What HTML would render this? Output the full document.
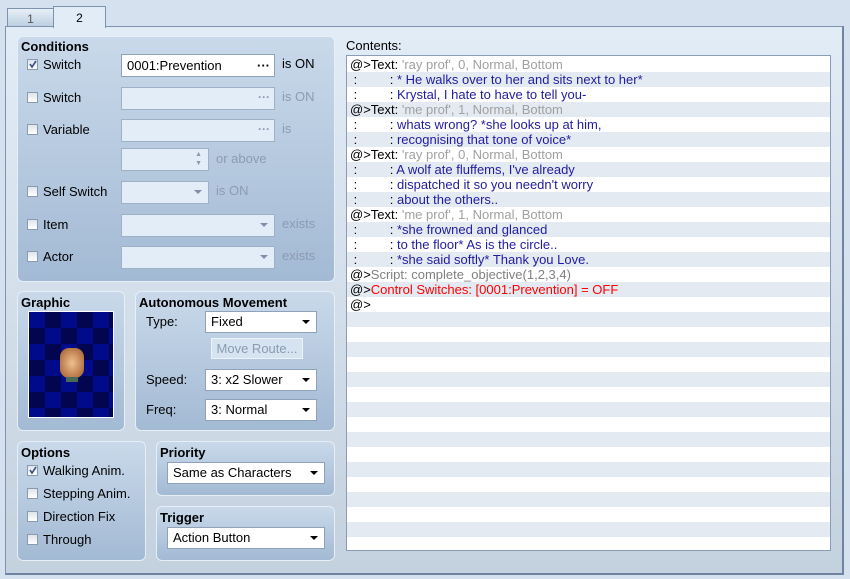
<!DOCTYPE html><html><head><style>
body{margin:0;width:850px;height:579px;background:#d5e1ee;font-family:"Liberation Sans","DejaVu Sans",sans-serif;font-size:12px;position:relative;overflow:hidden}
.a{position:absolute}
.frame{left:5px;top:26px;width:836px;height:546px;border:1px solid #7e93ae;border-right:2px solid #6f84a3;border-bottom:2px solid #6f84a3;background:linear-gradient(#e2ecf7,#c4d1de)}
.tab{top:6px;height:20px;border:1px solid #7e93ae;border-bottom:none;text-align:center;line-height:22px}
.pn{border:1px solid #e6eef7;border-radius:6px;background:linear-gradient(#c9d9ea,#a3bad4);box-sizing:border-box}
.h{font-weight:bold;color:#000;font-size:13px}
.cb{width:11px;height:11px;border:1px solid #8a9bb0;background:linear-gradient(#dfe5ec,#fff);box-sizing:border-box}
.fld{border:1px solid #9fb1c7;background:#e3edf8;box-sizing:border-box}
.wf{background:#fff;border:1px solid #8fa2b9;box-sizing:border-box;padding-left:5px;line-height:20px;font-size:13px}
.dim{color:#8c9bb3}
.arr{position:absolute;right:6px;top:8px;width:0;height:0;border-left:4px solid transparent;border-right:4px solid transparent;border-top:4px solid #000}
.arr.g{border-top-color:#7f8fa8}
.list{left:346px;top:55px;width:485px;height:496px;border:1px solid #8a9db5;box-sizing:border-box;background:#fff;overflow:hidden}
.r{height:15px;line-height:15px;white-space:nowrap;padding-left:3px;font-size:13px}
.r:nth-child(even){background:#e3eaf2}
.g{color:#a0a0a0}.b{color:#201ca0}.red{color:#f00}
.lb{font-size:13px}
</style></head><body>
<div class="a tab" style="left:7px;width:45px;background:linear-gradient(#e8f0f8,#b9cde0);color:#555;top:8px;height:18px;line-height:20px">1</div>
<div class="a frame"></div>
<div class="a tab" style="left:53px;width:51px;background:#e2ecf7;height:21px;z-index:2">2</div>

<div class="a pn" style="left:17px;top:36px;width:318px;height:246px"></div>
<div class="a h" style="left:21px;top:39px">Conditions</div>
<div class="a cb" style="left:27px;top:59px"><svg width="11" height="11" style="position:absolute;left:-1px;top:-1px"><path d="M3 5 L5 8 L9 2" stroke="#3b4f8a" stroke-width="1.6" fill="none"/></svg></div>
<div class="a lb" style="left:43px;top:57px">Switch</div>
<div class="a wf" style="left:121px;top:54px;width:154px;height:23px;line-height:22px">0001:Prevention<span style="position:absolute;right:4px;font-weight:bold">···</span></div>
<div class="a lb" style="left:282px;top:56px">is ON</div>

<div class="a cb" style="left:27px;top:92px"></div><div class="a lb" style="left:43px;top:90px">Switch</div>
<div class="a fld" style="left:121px;top:87px;width:154px;height:23px"><span class="dim" style="position:absolute;right:4px;top:2px;font-weight:bold">···</span></div>
<div class="a dim lb" style="left:282px;top:89px">is ON</div>

<div class="a cb" style="left:27px;top:124px"></div><div class="a lb" style="left:43px;top:122px">Variable</div>
<div class="a fld" style="left:121px;top:119px;width:154px;height:23px"><span class="dim" style="position:absolute;right:4px;top:2px;font-weight:bold">···</span></div>
<div class="a dim lb" style="left:282px;top:121px">is</div>
<div class="a fld" style="left:121px;top:148px;width:88px;height:23px"><span class="dim" style="position:absolute;right:6px;top:1px;font-size:7px;line-height:9px">▲<br>▼</span></div>
<div class="a dim lb" style="left:216px;top:151px">or above</div>

<div class="a cb" style="left:27px;top:186px"></div><div class="a lb" style="left:43px;top:184px">Self Switch</div>
<div class="a fld" style="left:121px;top:181px;width:88px;height:23px"><i class="arr g"></i></div>
<div class="a dim lb" style="left:216px;top:183px">is ON</div>

<div class="a cb" style="left:27px;top:219px"></div><div class="a lb" style="left:43px;top:217px">Item</div>
<div class="a fld" style="left:121px;top:214px;width:154px;height:23px"><i class="arr g"></i></div>
<div class="a dim lb" style="left:282px;top:216px">exists</div>

<div class="a cb" style="left:27px;top:251px"></div><div class="a lb" style="left:43px;top:249px">Actor</div>
<div class="a fld" style="left:121px;top:246px;width:154px;height:23px"><i class="arr g"></i></div>
<div class="a dim lb" style="left:282px;top:248px">exists</div>

<div class="a pn" style="left:17px;top:291px;width:108px;height:140px"></div>
<div class="a h" style="left:21px;top:295px">Graphic</div>
<div class="a" style="left:28px;top:311px;width:86px;height:107px;border:1px solid #fff;box-sizing:border-box;background:repeating-conic-gradient(#020650 0 25%,#000a8a 0 50%) 0 0/32px 32px"></div>
<div class="a" style="left:60px;top:348px;width:24px;height:30px;border-radius:9px;background:radial-gradient(#f0c090,#a05828)"></div>
<div class="a" style="left:66px;top:377px;width:12px;height:5px;background:#4a6a58"></div>

<div class="a pn" style="left:135px;top:291px;width:200px;height:140px"></div>
<div class="a h" style="left:139px;top:295px">Autonomous Movement</div>
<div class="a lb" style="left:146px;top:314px">Type:</div>
<div class="a wf" style="left:205px;top:311px;width:112px;height:22px">Fixed<i class="arr"></i></div>
<div class="a dim lb" style="left:211px;top:338px;width:92px;height:21px;border:1px solid #eef3f9;background:#d6e3f0;box-sizing:border-box;text-align:center;line-height:19px">Move Route...</div>
<div class="a lb" style="left:146px;top:372px">Speed:</div>
<div class="a wf" style="left:205px;top:369px;width:112px;height:22px">3: x2 Slower<i class="arr"></i></div>
<div class="a lb" style="left:146px;top:402px">Freq:</div>
<div class="a wf" style="left:205px;top:399px;width:112px;height:22px">3: Normal<i class="arr"></i></div>

<div class="a pn" style="left:17px;top:441px;width:129px;height:120px"></div>
<div class="a h" style="left:21px;top:445px">Options</div>
<div class="a cb" style="left:27px;top:465px"><svg width="11" height="11" style="position:absolute;left:-1px;top:-1px"><path d="M3 5 L5 8 L9 2" stroke="#3b4f8a" stroke-width="1.6" fill="none"/></svg></div><div class="a lb" style="left:43px;top:463px">Walking Anim.</div>
<div class="a cb" style="left:27px;top:488px"></div><div class="a lb" style="left:43px;top:486px">Stepping Anim.</div>
<div class="a cb" style="left:27px;top:511px"></div><div class="a lb" style="left:43px;top:509px">Direction Fix</div>
<div class="a cb" style="left:27px;top:534px"></div><div class="a lb" style="left:43px;top:532px">Through</div>

<div class="a pn" style="left:156px;top:441px;width:179px;height:55px"></div>
<div class="a h" style="left:160px;top:445px">Priority</div>
<div class="a wf" style="left:167px;top:462px;width:158px;height:22px">Same as Characters<i class="arr"></i></div>
<div class="a pn" style="left:156px;top:506px;width:179px;height:55px"></div>
<div class="a h" style="left:160px;top:510px">Trigger</div>
<div class="a wf" style="left:167px;top:527px;width:158px;height:22px">Action Button<i class="arr"></i></div>

<div class="a lb" style="left:346px;top:38px">Contents:</div>
<div class="a list"><div style="margin-top:1px">
<div class="r">@&gt;Text: <span class="g">'ray prof', 0, Normal, Bottom</span></div>
<div class="r">&nbsp;:&nbsp;&nbsp;&nbsp;&nbsp;&nbsp;&nbsp;&nbsp;&nbsp;&nbsp;: <span class="b">* He walks over to her and sits next to her*</span></div>
<div class="r">&nbsp;:&nbsp;&nbsp;&nbsp;&nbsp;&nbsp;&nbsp;&nbsp;&nbsp;&nbsp;: <span class="b">Krystal, I hate to have to tell you-</span></div>
<div class="r">@&gt;Text: <span class="g">'me prof', 1, Normal, Bottom</span></div>
<div class="r">&nbsp;:&nbsp;&nbsp;&nbsp;&nbsp;&nbsp;&nbsp;&nbsp;&nbsp;&nbsp;: <span class="b">whats wrong? *she looks up at him,</span></div>
<div class="r">&nbsp;:&nbsp;&nbsp;&nbsp;&nbsp;&nbsp;&nbsp;&nbsp;&nbsp;&nbsp;: <span class="b">recognising that tone of voice*</span></div>
<div class="r">@&gt;Text: <span class="g">'ray prof', 0, Normal, Bottom</span></div>
<div class="r">&nbsp;:&nbsp;&nbsp;&nbsp;&nbsp;&nbsp;&nbsp;&nbsp;&nbsp;&nbsp;: <span class="b">A wolf ate fluffems, I've already</span></div>
<div class="r">&nbsp;:&nbsp;&nbsp;&nbsp;&nbsp;&nbsp;&nbsp;&nbsp;&nbsp;&nbsp;: <span class="b">dispatched it so you needn't worry</span></div>
<div class="r">&nbsp;:&nbsp;&nbsp;&nbsp;&nbsp;&nbsp;&nbsp;&nbsp;&nbsp;&nbsp;: <span class="b">about the others..</span></div>
<div class="r">@&gt;Text: <span class="g">'me prof', 1, Normal, Bottom</span></div>
<div class="r">&nbsp;:&nbsp;&nbsp;&nbsp;&nbsp;&nbsp;&nbsp;&nbsp;&nbsp;&nbsp;: <span class="b">*she frowned and glanced</span></div>
<div class="r">&nbsp;:&nbsp;&nbsp;&nbsp;&nbsp;&nbsp;&nbsp;&nbsp;&nbsp;&nbsp;: <span class="b">to the floor* As is the circle..</span></div>
<div class="r">&nbsp;:&nbsp;&nbsp;&nbsp;&nbsp;&nbsp;&nbsp;&nbsp;&nbsp;&nbsp;: <span class="b">*she said softly* Thank you Love.</span></div>
<div class="r">@&gt;<span class="g" style="color:#808080">Script: complete_objective(1,2,3,4)</span></div>
<div class="r">@&gt;<span class="red">Control Switches: [0001:Prevention] = OFF</span></div>
<div class="r">@&gt;</div>
<div class="r"></div><div class="r"></div><div class="r"></div><div class="r"></div><div class="r"></div><div class="r"></div><div class="r"></div><div class="r"></div><div class="r"></div><div class="r"></div><div class="r"></div><div class="r"></div><div class="r"></div><div class="r"></div><div class="r"></div><div class="r"></div>
</div></div>
</body></html>
